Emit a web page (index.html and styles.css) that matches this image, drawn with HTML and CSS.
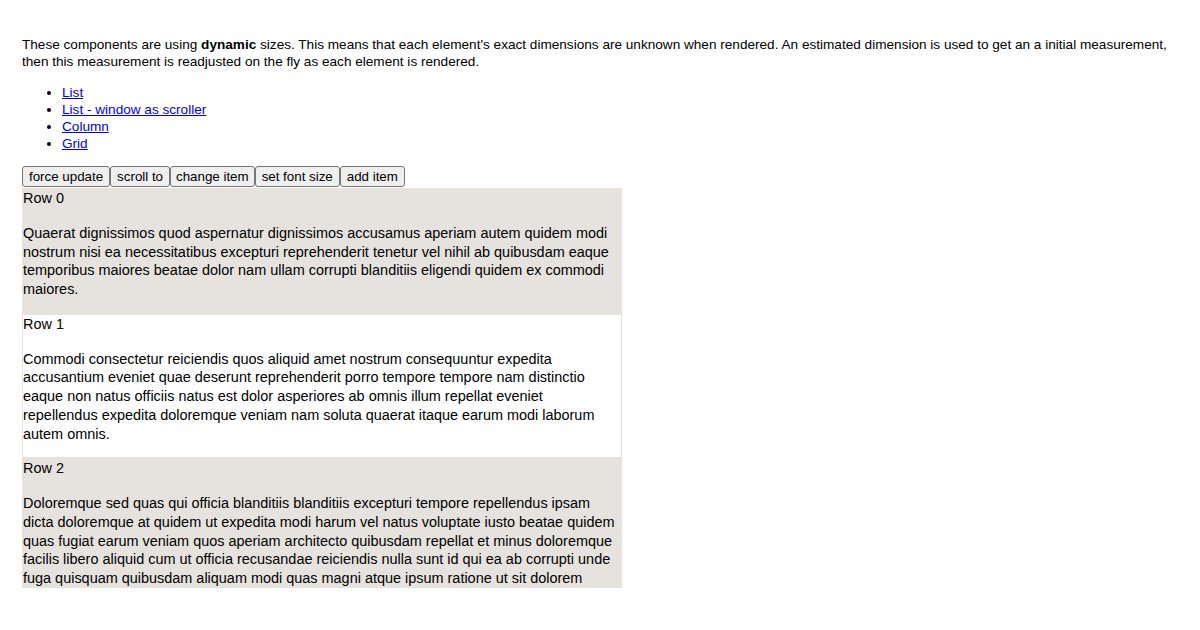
FILE: index.html
```html
<!DOCTYPE html>
<html>
<head>
<meta charset="utf-8">
<link rel="stylesheet" href="styles.css">
</head>
<body>
<div class="page">
<p class="intro">These components are using <b>dynamic</b> sizes. This means that each element's exact dimensions are unknown when rendered. An estimated dimension is used to get an a initial measurement, then this measurement is readjusted on the fly as each element is rendered.</p>
<ul class="nav">
<li><a href="#">List</a></li>
<li><a href="#">List - window as scroller</a></li>
<li><a href="#">Column</a></li>
<li><a href="#">Grid</a></li>
</ul>
<div class="toolbar"><button>force update</button><button>scroll to</button><button>change item</button><button>set font size</button><button>add item</button></div>
<div class="scroller">
<div class="row odd">
<div class="title">Row 0</div>
<p class="body">Quaerat dignissimos quod aspernatur dignissimos accusamus aperiam autem quidem modi nostrum nisi ea necessitatibus excepturi reprehenderit tenetur vel nihil ab quibusdam eaque temporibus maiores beatae dolor nam ullam corrupti blanditiis eligendi quidem ex commodi maiores.</p>
</div>
<div class="row">
<div class="title">Row 1</div>
<p class="body">Commodi consectetur reiciendis quos aliquid amet nostrum consequuntur expedita accusantium eveniet quae deserunt reprehenderit porro tempore tempore nam distinctio eaque non natus officiis natus est dolor asperiores ab omnis illum repellat eveniet repellendus expedita doloremque veniam nam soluta quaerat itaque earum modi laborum autem omnis.</p>
</div>
<div class="row odd">
<div class="title">Row 2</div>
<p class="body">Doloremque sed quas qui officia blanditiis blanditiis excepturi tempore repellendus ipsam dicta doloremque at quidem ut expedita modi harum vel natus voluptate iusto beatae quidem quas fugiat earum veniam quos aperiam architecto quibusdam repellat et minus doloremque facilis libero aliquid cum ut officia recusandae reiciendis nulla sunt id qui ea ab corrupti unde fuga quisquam quibusdam aliquam modi quas magni atque ipsum ratione ut sit dolorem consequatur.</p>
</div>
</div>
</div>
</body>
</html>
```
FILE: styles.css
```css
html, body {
  margin: 0;
  padding: 0;
  background: #fff;
}
body {
  font-family: "Liberation Sans", Arial, sans-serif;
  color: #000;
}
.page {
  padding: 0 22px;
}
.intro {
  font-size: 13.6px;
  line-height: 17px;
  margin: 36px 0 14px;
}
.nav {
  font-size: 13.6px;
  line-height: 17px;
  margin: 0 0 14px;
  padding-left: 40px;
}
.nav a {
  color: #0000ee;
}
.toolbar {
  display: flex;
  margin-bottom: 1px;
}
.toolbar button {
  font-family: "Liberation Sans", Arial, sans-serif;
  font-size: 13.333px;
  height: 21px;
  padding: 1px 6px;
  margin: 0;
  border: 1px solid #767676;
  border-radius: 3px;
  background: #efefef;
  color: #000;
}
.toolbar button:nth-child(3) {
  padding: 1px 5px;
}
.scroller {
  width: 600px;
  height: 400px;
  overflow: hidden;
}
.row {
  border: 1px solid #e6e3de;
  background: #fff;
  font-size: 14.45px;
  line-height: 18.75px;
}
.row.odd {
  background: #e6e3de;
}
.body {
  margin: 16px 0 14px;
}
```
